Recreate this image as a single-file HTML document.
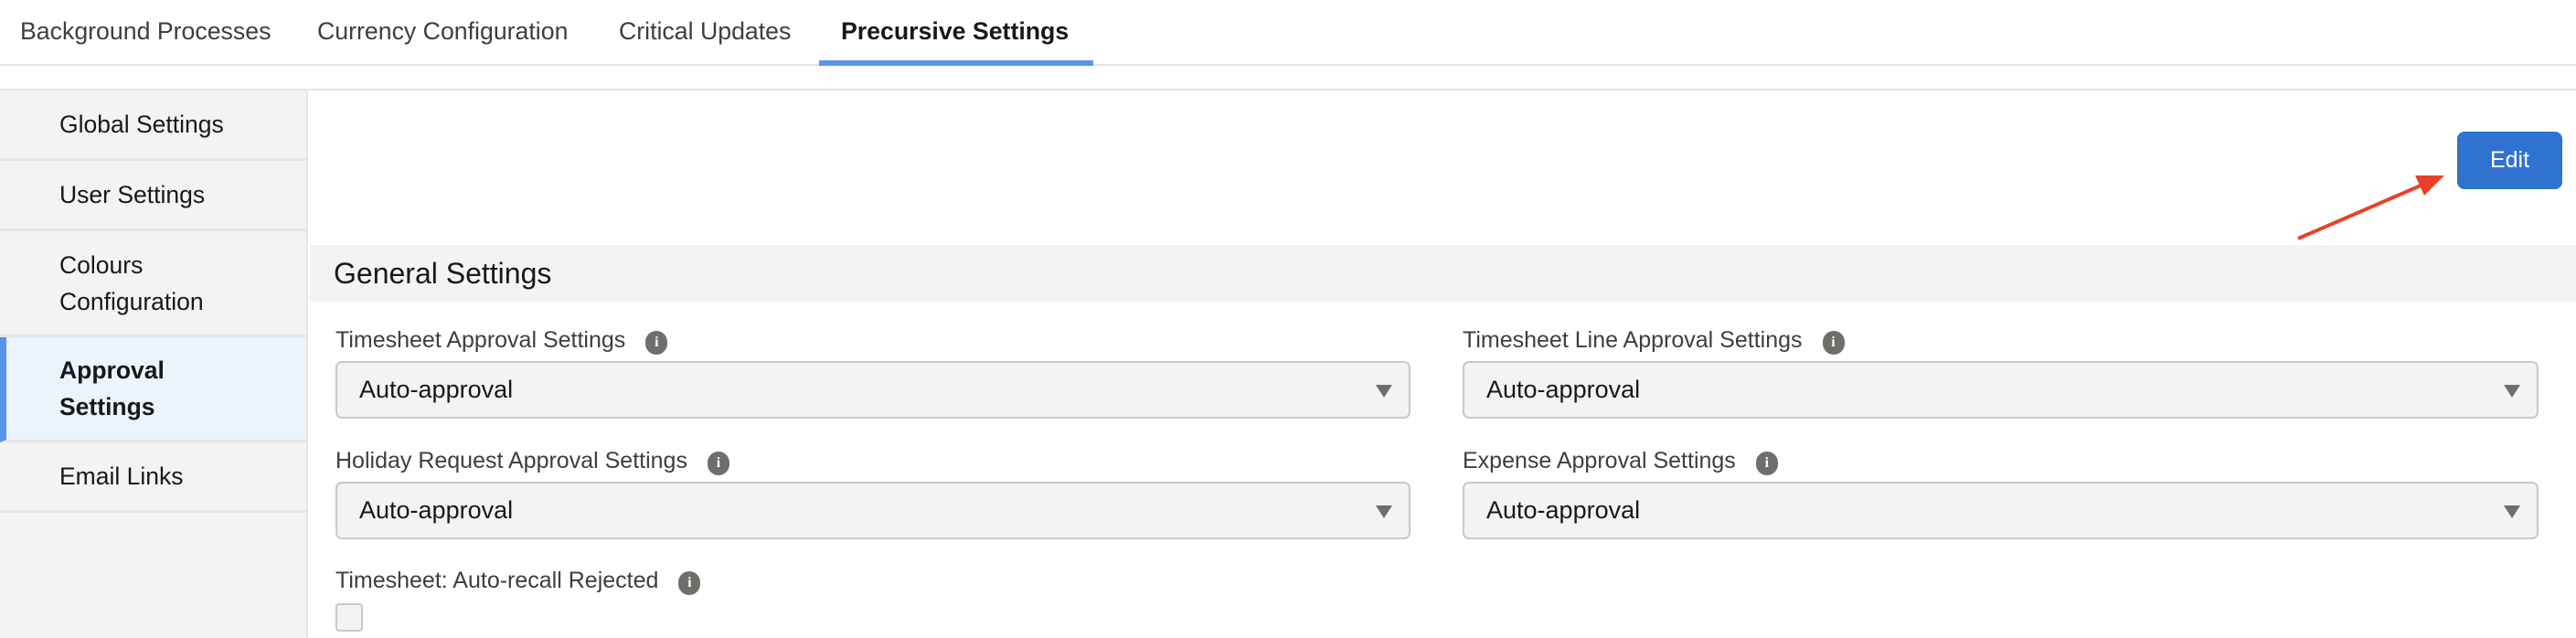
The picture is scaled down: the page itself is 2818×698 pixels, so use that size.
<!DOCTYPE html>
<html><head><meta charset="utf-8"><style>
*{box-sizing:border-box;margin:0;padding:0}
body{width:2818px;height:698px;overflow:hidden;background:#fff;font-family:"Liberation Sans",sans-serif;color:#181818;position:relative}
.abs{position:absolute;white-space:nowrap}
.tab{position:absolute;top:19px;font-size:26.7px;color:#3e3e3e}
.side{position:absolute;left:0;top:97px;width:337px;height:601px;background:#f3f3f3;border-right:2px solid #e5e5e5;border-top:2px solid #e5e5e5}
.item{position:absolute;left:0;width:335px;border-bottom:3px solid #e5e5e5;font-size:26.5px;color:#181818;padding-left:65px;display:flex;align-items:center;line-height:40px}
.lbl{position:absolute;font-size:25px;color:#3e3e3e;white-space:nowrap}
.info{display:inline-block;width:24px;height:26px;border-radius:12px;background:#706e6b;color:#fff;font-size:16px;font-weight:bold;text-align:center;line-height:26px;margin-left:22px;vertical-align:1px;font-family:"Liberation Serif",serif}
.sel{position:absolute;height:63px;background:#f3f3f3;border:2px solid #c9c9c9;border-radius:7px;font-size:27px;color:#181818;padding-left:24px;line-height:59px}
.sel:after{content:"";position:absolute;right:18px;top:24px;border-left:9px solid transparent;border-right:9px solid transparent;border-top:14px solid #706e6b}
</style></head><body>
<div class="tab" style="left:22px">Background Processes</div>
<div class="tab" style="left:347px">Currency Configuration</div>
<div class="tab" style="left:677px">Critical Updates</div>
<div class="tab" style="left:920px;font-weight:bold;color:#181818">Precursive Settings</div>
<div class="abs" style="left:0;top:70px;width:2818px;height:2px;background:#e5e5e5"></div>
<div class="abs" style="left:896px;top:66px;width:300px;height:6px;background:#5a94ea"></div>
<div class="abs" style="left:0;top:97px;width:2818px;height:2px;background:#e5e5e5"></div>

<div class="side">
<div class="item" style="top:0;height:77px">Global Settings</div>
<div class="item" style="top:77px;height:77px">User Settings</div>
<div class="item" style="top:154px;height:116px">Colours<br>Configuration</div>
<div class="item" style="top:270px;height:115px;background:#ebf3fd;font-weight:bold;border-left:7px solid #5a94ea;padding-left:58px">Approval<br>Settings</div>
<div class="item" style="top:385px;height:77px">Email Links</div>
</div>

<div class="abs" style="left:2688px;top:144px;width:115px;height:63px;background:#2f72d0;border-radius:8px;color:#fff;font-size:25px;text-align:center;line-height:63px">Edit</div>
<svg class="abs" style="left:0;top:0" width="2818" height="698"><line x1="2514" y1="261" x2="2655" y2="200" stroke="#e8412b" stroke-width="4"/><polygon points="2674,192 2642,192 2652,214" fill="#e8412b"/></svg>

<div class="abs" style="left:339px;top:268px;width:2479px;height:62px;background:#f3f3f3;font-size:32px;color:#181818;padding-left:26px;line-height:62px">General Settings</div>

<div class="lbl" style="left:367px;top:358px">Timesheet Approval Settings<span class="info">i</span></div>
<div class="sel" style="left:367px;top:395px;width:1176px">Auto-approval</div>
<div class="lbl" style="left:1600px;top:358px">Timesheet Line Approval Settings<span class="info">i</span></div>
<div class="sel" style="left:1600px;top:395px;width:1177px">Auto-approval</div>

<div class="lbl" style="left:367px;top:490px">Holiday Request Approval Settings<span class="info">i</span></div>
<div class="sel" style="left:367px;top:527px;width:1176px">Auto-approval</div>
<div class="lbl" style="left:1600px;top:490px">Expense Approval Settings<span class="info">i</span></div>
<div class="sel" style="left:1600px;top:527px;width:1177px">Auto-approval</div>

<div class="lbl" style="left:367px;top:621px">Timesheet: Auto-recall Rejected<span class="info">i</span></div>
<div class="abs" style="left:367px;top:660px;width:30px;height:31px;background:#f3f3f3;border:2px solid #c9c9c9;border-radius:4px"></div>
</body></html>
